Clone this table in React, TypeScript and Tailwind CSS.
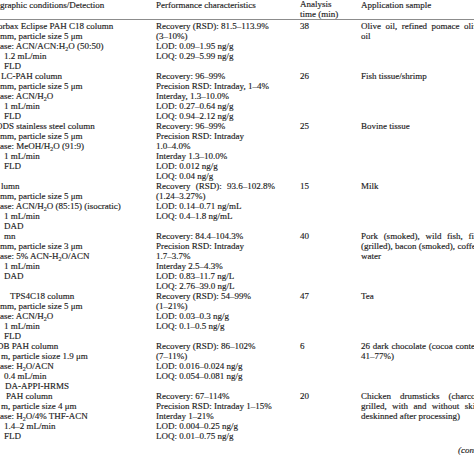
import React from "react";

const H2 = () => (
  <>
    H<sub className="text-[6px] leading-none">2</sub>O
  </>
);

type L = { t: React.ReactNode; x?: string; j?: boolean };

const Col1 = ({ lines }: { lines: L[] }) => (
  <div className="w-[156px] shrink-0">
    {lines.map((l, i) => (
      <div key={i} className={`whitespace-nowrap ${l.x ?? ""}`}>
        {l.t}
      </div>
    ))}
  </div>
);

const Col2 = ({ lines }: { lines: L[] }) => (
  <div className="w-[144px] shrink-0 pr-[25px]">
    {lines.map((l, i) =>
      l.j ? (
        <div key={i} className="text-justify [text-align-last:justify]">
          {l.t}
        </div>
      ) : (
        <div key={i} className="whitespace-nowrap">
          {l.t}
        </div>
      )
    )}
  </div>
);

const Col4 = ({ lines }: { lines: L[] }) => (
  <div className="w-[121px] shrink-0">
    {lines.map((l, i) =>
      l.j ? (
        <div key={i} className="text-justify [text-align-last:justify]">
          {l.t}
        </div>
      ) : (
        <div key={i} className="whitespace-nowrap">
          {l.t}
        </div>
      )
    )}
  </div>
);

const Row = ({
  c1,
  c2,
  t,
  c4,
}: {
  c1: L[];
  c2: L[];
  t: string;
  c4: L[];
}) => (
  <div className="flex">
    <Col1 lines={c1} />
    <Col2 lines={c2} />
    <div className="w-[61px] shrink-0">{t}</div>
    <Col4 lines={c4} />
  </div>
);

export default function App() {
  return (
    <div
      className="w-[474px] h-[474px] overflow-hidden bg-white text-[#1c1c1c] text-[9px] leading-[10px] [-webkit-text-stroke:0.15px_#1c1c1c]"
      style={{ fontFamily: '"Liberation Serif", "Times New Roman", serif' }}
    >
      <div className="w-[650px]">
        <div className="-mt-px flex h-[21px] border-b border-[#8c8c8c]">
          <div className="w-[156px] shrink-0 whitespace-nowrap pt-px">graphic conditions/Detection</div>
          <div className="w-[144px] shrink-0 whitespace-nowrap pt-px">Performance characteristics</div>
          <div className="w-[61px] shrink-0">
            <div>Analysis</div>
            <div>time (min)</div>
          </div>
          <div className="whitespace-nowrap pt-px">Application sample</div>
        </div>
        <div className="pt-px">
          <Row
            c1={[
              { t: "orbax Eclipse PAH C18 column", x: "-ml-[2px]" },
              { t: "mm, particle size 5 μm" },
              { t: <>ase: ACN/ACN:<H2 /> (50:50)</> },
              { t: "1.2 mL/min", x: "ml-[4px]" },
              { t: "FLD", x: "ml-[4px]" },
            ]}
            c2={[
              { t: "Recovery (RSD): 81.5–113.9%" },
              { t: "(3–10%)" },
              { t: "LOD: 0.09–1.95 ng/g" },
              { t: "LOQ: 0.29–5.99 ng/g" },
            ]}
            t="38"
            c4={[
              { t: "Olive oil, refined pomace olive", j: true },
              { t: "oil" },
            ]}
          />
          <Row
            c1={[
              { t: "LC-PAH column", x: "ml-[1px]" },
              { t: "mm, particle size 5 μm" },
              { t: <>ase: ACN/<H2 /></> },
              { t: "1 mL/min", x: "ml-[4px]" },
              { t: "FLD", x: "ml-[4px]" },
            ]}
            c2={[
              { t: "Recovery: 96–99%" },
              { t: "Precision RSD: Intraday, 1–4%" },
              { t: "Interday, 1.3–10.0%" },
              { t: "LOD: 0.27–0.64 ng/g" },
              { t: "LOQ: 0.94–2.12 ng/g" },
            ]}
            t="26"
            c4={[{ t: "Fish tissue/shrimp" }]}
          />
          <Row
            c1={[
              { t: "ODS stainless steel column", x: "-ml-[4px]" },
              { t: "mm, particle size 5 μm" },
              { t: <>ase: MeOH/<H2 /> (91:9)</> },
              { t: "1 mL/min", x: "ml-[4px]" },
              { t: "FLD", x: "ml-[4px]" },
            ]}
            c2={[
              { t: "Recovery: 96–99%" },
              { t: "Precision RSD: Intraday" },
              { t: "1.0–4.0%" },
              { t: "Interday 1.3–10.0%" },
              { t: "LOD: 0.012 ng/g" },
              { t: "LOQ: 0.04 ng/g" },
            ]}
            t="25"
            c4={[{ t: "Bovine tissue" }]}
          />
          <Row
            c1={[
              { t: "lumn", x: "ml-[1px]" },
              { t: "mm, particle size 5 μm" },
              { t: <>ase: ACN/<H2 /> (85:15) (isocratic)</> },
              { t: "1 mL/min", x: "ml-[4px]" },
              { t: "DAD", x: "ml-[4px]" },
            ]}
            c2={[
              { t: "Recovery (RSD): 93.6–102.8%", j: true },
              { t: "(1.24–3.27%)" },
              { t: "LOD: 0.14–0.71 ng/mL" },
              { t: "LOQ: 0.4–1.8 ng/mL" },
            ]}
            t="15"
            c4={[{ t: "Milk" }]}
          />
          <Row
            c1={[
              { t: "mn", x: "ml-[4px]" },
              { t: "mm, particle size 3 μm" },
              { t: <>ase: 5% ACN-<H2 />/ACN</> },
              { t: "1 mL/min", x: "ml-[4px]" },
              { t: "DAD", x: "ml-[4px]" },
            ]}
            c2={[
              { t: "Recovery: 84.4–104.3%" },
              { t: "Precision RSD: Intraday" },
              { t: "1.7–3.7%" },
              { t: "Interday 2.5–4.3%" },
              { t: "LOD: 0.83–11.7 ng/L" },
              { t: "LOQ: 2.76–39.0 ng/L" },
            ]}
            t="40"
            c4={[
              { t: "Pork (smoked), wild fish, fish", j: true },
              { t: "(grilled), bacon (smoked), coffee,", j: true },
              { t: "water" },
            ]}
          />
          <Row
            c1={[
              { t: "TPS4C18 column", x: "ml-[10px]" },
              { t: "mm, particle size 5 μm" },
              { t: <>ase: ACN/<H2 /></> },
              { t: "1 mL/min", x: "ml-[4px]" },
              { t: "FLD", x: "ml-[4px]" },
            ]}
            c2={[
              { t: "Recovery (RSD): 54–99%" },
              { t: "(1–21%)" },
              { t: "LOD: 0.03–0.3 ng/g" },
              { t: "LOQ: 0.1–0.5 ng/g" },
            ]}
            t="47"
            c4={[{ t: "Tea" }]}
          />
          <Row
            c1={[
              { t: "DB PAH column", x: "-ml-[3px]" },
              { t: "m, particle sioze 1.9 μm", x: "ml-[1px]" },
              { t: <>ase: <H2 />/ACN</> },
              { t: "0.4 mL/min", x: "ml-[4px]" },
              { t: "DA-APPI-HRMS", x: "ml-[5px]" },
            ]}
            c2={[
              { t: "Recovery (RSD): 86–102%" },
              { t: "(7–11%)" },
              { t: "LOD: 0.016–0.024 ng/g" },
              { t: "LOQ: 0.054–0.081 ng/g" },
            ]}
            t="6"
            c4={[
              { t: "26 dark chocolate (cocoa content", j: true },
              { t: "41–77%)" },
            ]}
          />
          <Row
            c1={[
              { t: "PAH column", x: "ml-[6px]" },
              { t: "m, particle size 4 μm", x: "ml-[1px]" },
              { t: <>ase: <H2 />/4% THF-ACN</> },
              { t: "1.4–2 mL/min", x: "ml-[4px]" },
              { t: "FLD", x: "ml-[4px]" },
            ]}
            c2={[
              { t: "Recovery: 67–114%" },
              { t: "Precision RSD: Intraday 1–15%" },
              { t: "Interday 1–21%" },
              { t: "LOD: 0.004–0.25 ng/g" },
              { t: "LOQ: 0.01–0.75 ng/g" },
            ]}
            t="20"
            c4={[
              { t: "Chicken drumsticks (charcoal", j: true },
              { t: "grilled, with and without skin,", j: true },
              { t: "deskinned after processing)" },
            ]}
          />
        </div>
        <div className="mt-[4px] whitespace-nowrap pl-[458px] italic">(continued)</div>
      </div>
    </div>
  );
}
